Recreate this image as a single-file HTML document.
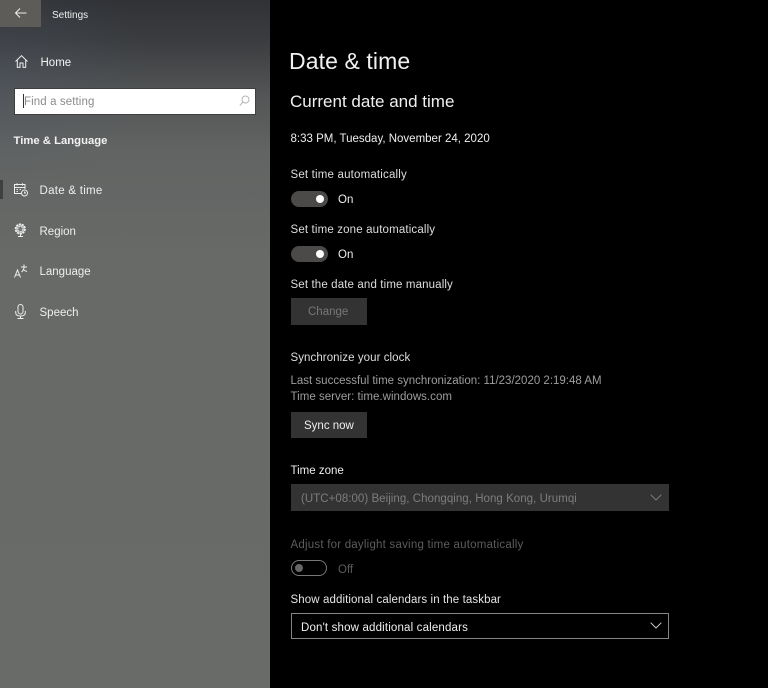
<!DOCTYPE html>
<html>
<head>
<meta charset="utf-8">
<style>
html,body{margin:0;padding:0;width:768px;height:688px;overflow:hidden;background:#000;font-family:"Liberation Sans",sans-serif}
#wrap{position:absolute;left:0;top:0;width:768px;height:688px;filter:blur(.35px)}
#side{position:absolute;left:0;top:0;width:270px;height:688px;background:
 radial-gradient(ellipse 150px 120px at 0 75px,rgba(80,90,105,.3),rgba(80,90,105,0)),
 linear-gradient(180deg,#303236 0,#3a3c3f 40px,#535556 95px,#626463 150px,#686a68 260px,#696b69 688px)}
.t{position:absolute;white-space:nowrap;line-height:16px;font-size:11.5px;color:#fff}
svg{position:absolute;overflow:visible}
.s{fill:none;stroke:#eee;stroke-width:1}
.b{position:absolute;background:#333}
</style>
</head>
<body>
<div id="wrap">
<div id="side"></div>
<div style="position:absolute;left:0;top:0;width:41px;height:27px;background:#5d5c58"></div>
<svg style="left:14px;top:7px" width="14" height="12" viewBox="0 0 14 12"><path class="s" d="M1.500 6H12.500M6 1.500L1.500 6L6 10.500"/></svg>
<div class="t" style="left:52px;top:8px;font-size:10px;color:#eee">Settings</div>

<svg style="left:15px;top:55px" width="13" height="13" viewBox="0 0 13 13"><path class="s" d="M.5 6.500L6.500.7L12.500 6.500M2.300 5V12.400H5V8H8V12.400H10.700V5"/></svg>
<div class="t" style="left:40.500px;top:55px;color:#f4f4f4">Home</div>

<div style="position:absolute;left:14px;top:88px;width:240px;height:25px;background:#fff;border:1px solid #3f3f3f"></div>
<div style="position:absolute;left:23px;top:94px;width:1px;height:14px;background:#333"></div>
<div class="t" style="left:24px;top:94px;color:#8b8b8b;letter-spacing:.1px">Find a setting</div>
<svg style="left:239px;top:95px" width="11" height="12" viewBox="0 0 11 12"><circle cx="6.500" cy="4.500" r="3.500" fill="none" stroke="#b5b5b5"/><path d="M4 7L.7 10.700" stroke="#b5b5b5" fill="none"/></svg>

<div class="t" style="left:13.500px;top:133px;font-size:11.300px;font-weight:bold;color:#f2f2f2">Time &amp; Language</div>

<div style="position:absolute;left:0;top:180px;width:3px;height:19px;background:#3f3f3f"></div>
<svg style="left:14px;top:183px" width="14" height="14" viewBox="0 0 14 14"><path class="s" d="M8 10.500H.5V1.500H11V6M.5 4.500H11M3 .3V2.500M8.500 .3V2.500M2.500 6.500H4M5.500 6.500H7M2.500 8.500H4"/><circle class="s" cx="10.500" cy="10" r="3"/><path class="s" d="M10.500 8.500V10H12"/></svg>
<div class="t" style="left:39.500px;top:183px;color:#eee;letter-spacing:.27px">Date &amp; time</div>

<svg style="left:14px;top:223px" width="13" height="15" viewBox="0 0 13 15"><circle cx="6.300" cy="6" r="4.800" fill="#bbb" stroke="#eee" stroke-width="1.600" stroke-dasharray="2 1"/><circle cx="6.300" cy="6" r="2.500" fill="#777" stroke="#ddd" stroke-dasharray="1.500 1"/><path class="s" d="M6.500 11V13.500M4 13.500H9"/></svg>
<div class="t" style="left:39.500px;top:224px;color:#eee">Region</div>

<svg style="left:14px;top:264px" width="14" height="14" viewBox="0 0 14 14"><path class="s" d="M.5 13.500L3.500 6L6.500 13.500M1.700 11H5.300M7 3H13M10 .5V3M10 3C10 6 9 7 7.500 8M9 5C10 6.500 11 7 13 7.500"/></svg>
<div class="t" style="left:39.500px;top:264px;color:#eee">Language</div>

<svg style="left:15px;top:304px" width="11" height="15" viewBox="0 0 11 15"><rect class="s" x="3" y=".5" width="5" height="9.500" rx="2.500"/><path class="s" d="M.7 7V8.500C.7 10.800 2.500 12 5.500 12C8.500 12 10.300 10.800 10.300 8.500V7M5.500 12V14.500M2.500 14.500H8.500"/></svg>
<div class="t" style="left:39.500px;top:305px;color:#eee">Speech</div>

<div class="t" style="left:289px;top:46px;line-height:30px;font-size:23px;color:#f0f0f0;letter-spacing:.1px">Date &amp; time</div>
<div class="t" style="left:290px;top:91px;line-height:22px;font-size:17px;color:#f0f0f0">Current date and time</div>
<div class="t" style="left:290.500px;top:131px;color:#eee">8:33 PM, Tuesday, November 24, 2020</div>

<div class="t" style="left:290.500px;top:167px;color:#ddd;letter-spacing:.18px">Set time automatically</div>
<div style="position:absolute;left:291px;top:191px;width:37px;height:16px;border-radius:8px;background:#4c4a48"></div>
<div style="position:absolute;left:316px;top:195px;width:8px;height:8px;border-radius:50%;background:#fff"></div>
<div class="t" style="left:338px;top:192px;color:#eee">On</div>

<div class="t" style="left:290.500px;top:222px;color:#ddd;letter-spacing:.15px">Set time zone automatically</div>
<div style="position:absolute;left:291px;top:246px;width:37px;height:16px;border-radius:8px;background:#4c4a48"></div>
<div style="position:absolute;left:316px;top:250px;width:8px;height:8px;border-radius:50%;background:#fff"></div>
<div class="t" style="left:338px;top:247px;color:#eee">On</div>

<div class="t" style="left:290.500px;top:277px;color:#ddd;letter-spacing:.13px">Set the date and time manually</div>
<div class="b" style="left:291px;top:298px;width:76px;height:27px"></div>
<div class="t" style="left:308px;top:304px;color:#777">Change</div>

<div class="t" style="left:290.500px;top:350px;color:#ddd;letter-spacing:.07px">Synchronize your clock</div>
<div class="t" style="left:290.500px;top:373px;color:#9d9d9d">Last successful time synchronization: 11/23/2020 2:19:48 AM</div>
<div class="t" style="left:290.500px;top:389px;color:#9d9d9d;letter-spacing:.03px">Time server: time.windows.com</div>
<div class="b" style="left:291px;top:412px;width:76px;height:26px"></div>
<div class="t" style="left:304px;top:418px;color:#eee">Sync now</div>

<div class="t" style="left:290.500px;top:463px;color:#eee">Time zone</div>
<div class="b" style="left:291px;top:484px;width:378px;height:27px"></div>
<div class="t" style="left:301px;top:491px;color:#7d7d7d;letter-spacing:.04px">(UTC+08:00) Beijing, Chongqing, Hong Kong, Urumqi</div>
<svg style="left:650px;top:494px" width="12" height="7" viewBox="0 0 12 7"><path d="M.7 .7L6 6L11.300 .7" fill="none" stroke="#7d7d7d"/></svg>

<div class="t" style="left:290.500px;top:537px;color:#5c5c5c;letter-spacing:.22px">Adjust for daylight saving time automatically</div>
<div style="position:absolute;left:291px;top:560px;width:34px;height:14px;border-radius:8px;border:1.500px solid #777"></div>
<div style="position:absolute;left:295px;top:564px;width:8px;height:8px;border-radius:50%;background:#666"></div>
<div class="t" style="left:338px;top:562px;color:#5c5c5c">Off</div>

<div class="t" style="left:290.500px;top:592px;color:#e4e4e4;letter-spacing:.1px">Show additional calendars in the taskbar</div>
<div style="position:absolute;left:291px;top:613px;width:376px;height:24px;border:1.500px solid #858585"></div>
<div class="t" style="left:301px;top:620px;color:#f0f0f0;letter-spacing:.16px">Don't show additional calendars</div>
<svg style="left:650px;top:622px" width="12" height="7" viewBox="0 0 12 7"><path d="M.7 .7L6 6L11.300 .7" fill="none" stroke="#ccc"/></svg>
</div>
</body>
</html>
